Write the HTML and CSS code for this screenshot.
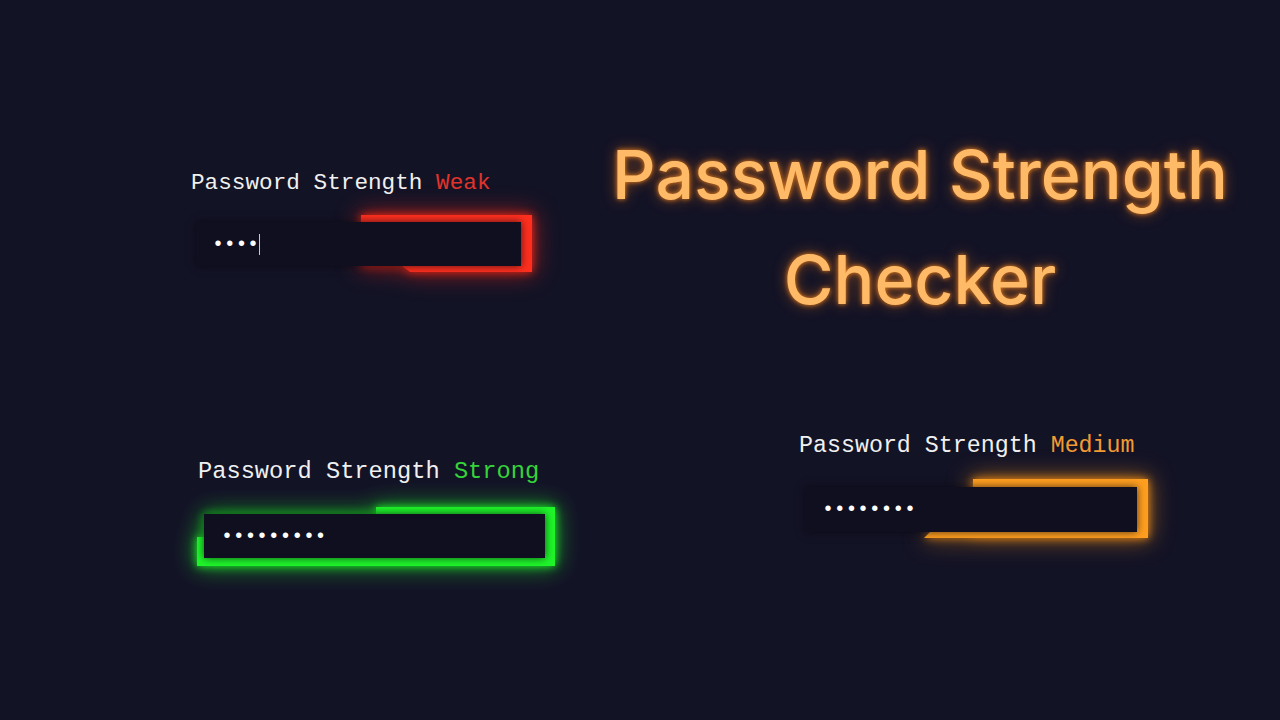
FILE: index.html
```html
<!DOCTYPE html>
<html lang="en">
<head>
  <meta charset="UTF-8">
  <meta name="viewport" content="width=device-width, initial-scale=1.0">
  <title>Password Strength Checker</title>
  <link rel="stylesheet" href="styles.css">
</head>
<body>
  <div class="board">
    <div class="column column-left">
      <div class="meter meter-weak">
        <p class="meter-label">Password Strength <span class="level">Weak</span></p>
        <div class="field">
          <div class="field-glow"><div class="field-bar"></div></div>
          <div class="field-input"><span class="dots">••••</span><span class="caret"></span></div>
        </div>
      </div>

      <div class="meter meter-strong">
        <p class="meter-label">Password Strength <span class="level">Strong</span></p>
        <div class="field">
          <div class="field-glow"><div class="field-bar"></div></div>
          <div class="field-input"><span class="dots">•••••••••</span></div>
        </div>
      </div>
    </div>

    <div class="column column-right">
      <h1 class="title">Password Strength<br>Checker</h1>

      <div class="meter meter-medium">
        <p class="meter-label">Password Strength <span class="level">Medium</span></p>
        <div class="field">
          <div class="field-glow"><div class="field-bar"></div></div>
          <div class="field-input"><span class="dots">••••••••</span></div>
        </div>
      </div>
    </div>
  </div>
</body>
</html>
```

FILE: styles.css
```css
body {
  margin: 0;
  background-color: #131326;
  color: #f0f0f0;
  font-family: 'Liberation Mono', 'Courier New', monospace;
}

.board {
  display: grid;
  grid-template-columns: 560px 720px;
  height: 720px;
}

.column {
  display: flex;
  flex-direction: column;
}

/* ---- title ---- */

.title {
  margin: 122px 0 0;
  font-family: 'Inter', sans-serif;
  font-size: 68px;
  font-weight: 500;
  line-height: 105px;
  text-align: center;
  color: #ffba68;
  text-shadow: 0 0 5px rgba(255, 140, 30, 0.9), 0 0 14px rgba(255, 130, 20, 0.5);
}

/* ---- strength meter ---- */

.meter-label {
  margin: 0;
  font-size: 22.7px;
  line-height: 26px;
  white-space: nowrap;
}

.field {
  position: relative;
  height: 44px;
}

.field-glow {
  position: absolute;
}

.field-bar {
  width: 100%;
  height: 100%;
}

.field-input {
  position: relative;
  height: 100%;
  display: flex;
  align-items: center;
  background-color: #100f1f;
  box-shadow: 0 0 8px rgba(6, 6, 14, 0.7);
}

.dots {
  font-size: 20px;
  letter-spacing: -0.3px;
  color: #ffffff;
}

.caret {
  width: 1px;
  height: 21px;
  background-color: #c8c8d0;
}

/* weak */
.meter-weak {
  margin: 170px 0 0 191px;
}

.meter-weak .level {
  color: #e0342b;
}

.meter-weak .field {
  width: 325px;
  margin: 26px 0 0 5px;
}

.meter-weak .field-input {
  padding-left: 16px;
}

.meter-weak .field-glow {
  inset: -7px -11px -6px 0;
  filter: drop-shadow(0 0 4px rgba(255, 40, 20, 0.9)) drop-shadow(0 0 11px rgba(255, 40, 20, 0.6));
}

.meter-weak .field-bar {
  background-color: #ff2f1f;
  clip-path: polygon(165px 0, 100% 0, 100% 100%, 214px 100%, 206px calc(100% - 6px), 165px calc(100% - 6px));
}

/* strong */
.meter-strong {
  margin: 193px 0 0 198px;
}

.meter-strong .meter-label {
  font-size: 23.7px;
}

.meter-strong .level {
  color: #35d43a;
}

.meter-strong .field {
  width: 341px;
  margin: 29px 0 0 6px;
}

.meter-strong .field-input {
  padding-left: 17px;
}

.meter-strong .field-glow {
  inset: -7px -10px -8px -7px;
  filter: drop-shadow(0 0 4px rgba(30, 255, 40, 0.9)) drop-shadow(0 0 11px rgba(30, 255, 40, 0.6));
}

.meter-strong .field-bar {
  background-color: #1ff52a;
  clip-path: polygon(179px 0, 100% 0, 100% 100%, 0 100%, 0 30px, 7px 30px, 7px 7px, 179px 7px);
}

/* medium */
.meter-medium {
  margin: 101px 0 0 239px;
}

.meter-medium .meter-label {
  font-size: 23.3px;
}

.meter-medium .level {
  color: #f39b33;
}

.meter-medium .field {
  width: 332px;
  height: 45px;
  margin: 28px 0 0 6px;
}

.meter-medium .field-input {
  padding-left: 17px;
}

.meter-medium .field-glow {
  inset: -8px -11px -6px 0;
  filter: drop-shadow(0 0 4px rgba(255, 150, 20, 0.9)) drop-shadow(0 0 11px rgba(255, 150, 20, 0.6));
}

.meter-medium .field-bar {
  background-color: #ff9f1f;
  clip-path: polygon(168px 0, 100% 0, 100% 100%, 119px 100%, 125px calc(100% - 6px), 168px calc(100% - 6px));
}
```
